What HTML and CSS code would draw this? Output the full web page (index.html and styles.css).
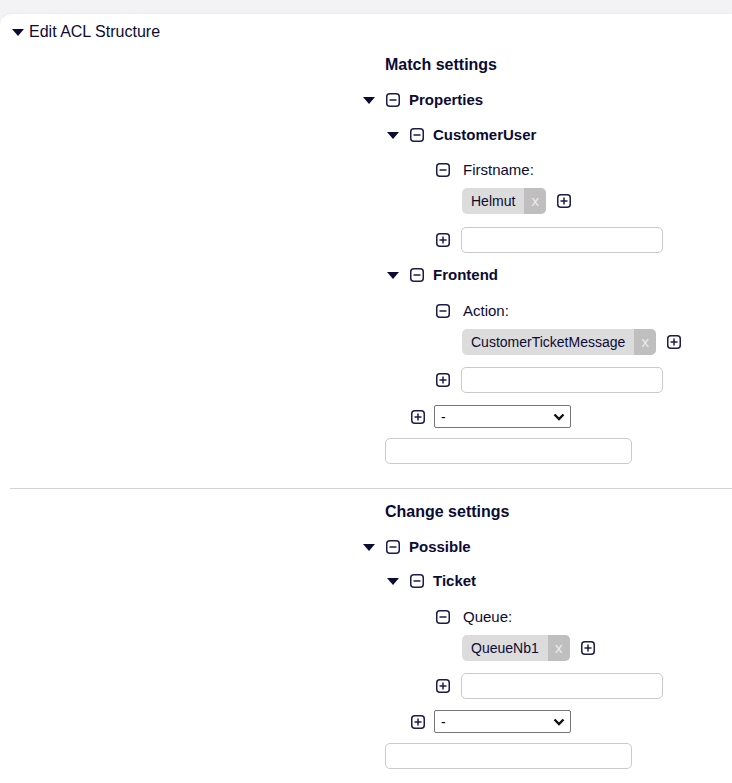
FILE: index.html
```html
<!DOCTYPE html>
<html>
<head>
<meta charset="utf-8">
<link rel="stylesheet" href="styles.css">
</head>
<body>
<div class="card">
  <div class="widget-header">
    <svg class="caret hdr" width="12" height="7" viewBox="0 0 12 7"><path d="M0 0H12L6 7Z"/></svg>
    <span>Edit ACL Structure</span>
  </div>

  <div class="section">
    <div class="section-title">Match settings</div>
    <div class="node">
      <div class="node-row">
        <svg class="caret" width="12" height="7" viewBox="0 0 12 7"><path d="M0 0H12L6 7Z"/></svg>
        <svg class="box" width="14" height="14" viewBox="0 0 14 14"><rect x="0.75" y="0.75" width="12.5" height="12.5" rx="3"/><path d="M3.5 7H10.5"/></svg>
        <span class="label">Properties</span>
      </div>
      <div class="children">
        <div class="node">
          <div class="node-row">
            <svg class="caret" width="12" height="7" viewBox="0 0 12 7"><path d="M0 0H12L6 7Z"/></svg>
            <svg class="box" width="14" height="14" viewBox="0 0 14 14"><rect x="0.75" y="0.75" width="12.5" height="12.5" rx="3"/><path d="M3.5 7H10.5"/></svg>
            <span class="label">CustomerUser</span>
          </div>
          <div class="attrs">
            <div class="attr-row">
              <svg class="box" width="14" height="14" viewBox="0 0 14 14"><rect x="0.75" y="0.75" width="12.5" height="12.5" rx="3"/><path d="M3.5 7H10.5"/></svg>
              <span class="attr-label">Firstname:</span>
            </div>
            <div class="value-row">
              <span class="chip"><span class="chip-text">Helmut</span><span class="chip-x">x</span></span>
              <svg class="box" width="14" height="14" viewBox="0 0 14 14"><rect x="0.75" y="0.75" width="12.5" height="12.5" rx="3"/><path d="M3.5 7H10.5M7 3.5V10.5"/></svg>
            </div>
            <div class="input-row">
              <svg class="box" width="14" height="14" viewBox="0 0 14 14"><rect x="0.75" y="0.75" width="12.5" height="12.5" rx="3"/><path d="M3.5 7H10.5M7 3.5V10.5"/></svg>
              <input class="text-input short" type="text">
            </div>
          </div>
        </div>
        <div class="node">
          <div class="node-row">
            <svg class="caret" width="12" height="7" viewBox="0 0 12 7"><path d="M0 0H12L6 7Z"/></svg>
            <svg class="box" width="14" height="14" viewBox="0 0 14 14"><rect x="0.75" y="0.75" width="12.5" height="12.5" rx="3"/><path d="M3.5 7H10.5"/></svg>
            <span class="label">Frontend</span>
          </div>
          <div class="attrs">
            <div class="attr-row">
              <svg class="box" width="14" height="14" viewBox="0 0 14 14"><rect x="0.75" y="0.75" width="12.5" height="12.5" rx="3"/><path d="M3.5 7H10.5"/></svg>
              <span class="attr-label">Action:</span>
            </div>
            <div class="value-row">
              <span class="chip"><span class="chip-text">CustomerTicketMessage</span><span class="chip-x">x</span></span>
              <svg class="box" width="14" height="14" viewBox="0 0 14 14"><rect x="0.75" y="0.75" width="12.5" height="12.5" rx="3"/><path d="M3.5 7H10.5M7 3.5V10.5"/></svg>
            </div>
            <div class="input-row">
              <svg class="box" width="14" height="14" viewBox="0 0 14 14"><rect x="0.75" y="0.75" width="12.5" height="12.5" rx="3"/><path d="M3.5 7H10.5M7 3.5V10.5"/></svg>
              <input class="text-input short" type="text">
            </div>
          </div>
        </div>
        <div class="add-row">
          <svg class="box" width="14" height="14" viewBox="0 0 14 14"><rect x="0.75" y="0.75" width="12.5" height="12.5" rx="3"/><path d="M3.5 7H10.5M7 3.5V10.5"/></svg>
          <span class="select-wrap">
            <select class="select"><option>-</option></select>
            <svg class="chev" width="12" height="8" viewBox="0 0 12 8"><path d="M1.5 1.5L6 6L10.5 1.5"/></svg>
          </span>
        </div>
      </div>
    </div>
    <input class="text-input long" type="text">
  </div>

  <div class="sep"></div>

  <div class="section second">
    <div class="section-title">Change settings</div>
    <div class="node">
      <div class="node-row">
        <svg class="caret" width="12" height="7" viewBox="0 0 12 7"><path d="M0 0H12L6 7Z"/></svg>
        <svg class="box" width="14" height="14" viewBox="0 0 14 14"><rect x="0.75" y="0.75" width="12.5" height="12.5" rx="3"/><path d="M3.5 7H10.5"/></svg>
        <span class="label">Possible</span>
      </div>
      <div class="children">
        <div class="node">
          <div class="node-row tight">
            <svg class="caret" width="12" height="7" viewBox="0 0 12 7"><path d="M0 0H12L6 7Z"/></svg>
            <svg class="box" width="14" height="14" viewBox="0 0 14 14"><rect x="0.75" y="0.75" width="12.5" height="12.5" rx="3"/><path d="M3.5 7H10.5"/></svg>
            <span class="label">Ticket</span>
          </div>
          <div class="attrs">
            <div class="attr-row">
              <svg class="box" width="14" height="14" viewBox="0 0 14 14"><rect x="0.75" y="0.75" width="12.5" height="12.5" rx="3"/><path d="M3.5 7H10.5"/></svg>
              <span class="attr-label">Queue:</span>
            </div>
            <div class="value-row">
              <span class="chip"><span class="chip-text">QueueNb1</span><span class="chip-x">x</span></span>
              <svg class="box" width="14" height="14" viewBox="0 0 14 14"><rect x="0.75" y="0.75" width="12.5" height="12.5" rx="3"/><path d="M3.5 7H10.5M7 3.5V10.5"/></svg>
            </div>
            <div class="input-row">
              <svg class="box" width="14" height="14" viewBox="0 0 14 14"><rect x="0.75" y="0.75" width="12.5" height="12.5" rx="3"/><path d="M3.5 7H10.5M7 3.5V10.5"/></svg>
              <input class="text-input short" type="text">
            </div>
          </div>
        </div>
        <div class="add-row">
          <svg class="box" width="14" height="14" viewBox="0 0 14 14"><rect x="0.75" y="0.75" width="12.5" height="12.5" rx="3"/><path d="M3.5 7H10.5M7 3.5V10.5"/></svg>
          <span class="select-wrap">
            <select class="select"><option>-</option></select>
            <svg class="chev" width="12" height="8" viewBox="0 0 12 8"><path d="M1.5 1.5L6 6L10.5 1.5"/></svg>
          </span>
        </div>
      </div>
    </div>
    <input class="text-input long" type="text">
  </div>
</div>
</body>
</html>
```

FILE: styles.css
```css
html, body {
  margin: 0;
  padding: 0;
}
body {
  background: #f3f3f5;
  font-family: "Liberation Sans", Arial, sans-serif;
  color: #0b0b33;
  height: 783px;
  overflow: hidden;
}
.card {
  margin-top: 14px;
  background: #ffffff;
  border-top-left-radius: 12px;
  height: 769px;
  box-shadow: 0 -1px 2px rgba(0, 0, 0, 0.03);
}
.widget-header {
  display: flex;
  align-items: center;
  height: 20px;
  padding-top: 8px;
  padding-left: 12px;
  font-size: 16px;
  line-height: 20px;
}
.widget-header span {
  margin-left: 5px;
}
.caret path {
  fill: #0b0b33;
}
.box {
  flex: none;
  display: block;
}
.box rect {
  fill: none;
  stroke: #1b1b4d;
  stroke-width: 1.5;
}
.box path {
  fill: none;
  stroke: #1b1b4d;
  stroke-width: 1.5;
}
.section {
  padding-left: 363px;
}
.section-title {
  margin-top: 13px;
  margin-left: 22px;
  height: 20px;
  line-height: 20px;
  font-size: 16px;
  font-weight: bold;
}
.second .section-title {
  margin-top: 13px;
}
.node-row {
  display: flex;
  align-items: center;
  height: 20px;
  margin-top: 15px;
}
.node-row.tight {
  margin-top: 14px;
}
.node + .node > .node-row {
  margin-top: 12px;
}
.node-row .caret {
  flex: none;
  margin-right: 11px;
}
.node-row .label {
  margin-left: 9px;
  font-size: 15px;
  font-weight: bold;
  line-height: 20px;
}
.children {
  padding-left: 24px;
}
.attrs {
  padding-left: 49px;
}
.attr-row {
  display: flex;
  align-items: center;
  height: 20px;
  margin-top: 15px;
}
.node + .node .attr-row,
.second .attr-row {
  margin-top: 16px;
}
.attr-label {
  margin-left: 13px;
  font-size: 15px;
  line-height: 20px;
}
.value-row {
  display: flex;
  align-items: center;
  margin-top: 8px;
  padding-left: 26px;
  height: 26px;
}
.chip {
  display: flex;
  height: 26px;
  border-radius: 5px;
  overflow: hidden;
  background: #dcdcdc;
  font-size: 14px;
  line-height: 26px;
  margin-right: 11px;
}
.chip-text {
  padding: 0 9px;
}
.chip-x {
  width: 22px;
  text-align: center;
  background: #bfbfbf;
  color: #ececec;
  font-size: 15px;
}
.input-row {
  display: flex;
  align-items: center;
  margin-top: 13px;
}
.node + .node .input-row,
.second .input-row {
  margin-top: 12px;
}
.input-row .box {
  margin-right: 11px;
}
.text-input {
  box-sizing: border-box;
  display: block;
  height: 26px;
  margin: 0;
  border: 1px solid #cacaca;
  border-radius: 5px;
  background: #fff;
  padding: 0 6px;
  font-family: inherit;
  font-size: 14px;
  outline: none;
}
.text-input.short {
  width: 202px;
}
.text-input.long {
  width: 247px;
  margin-left: 22px;
  margin-top: 10px;
}
.add-row {
  display: flex;
  align-items: center;
  margin-top: 12px;
  padding-left: 24px;
}
.second .add-row {
  margin-top: 11px;
}
.add-row .box {
  margin-right: 9px;
}
.select-wrap {
  position: relative;
  display: block;
}
.select {
  -webkit-appearance: none;
  appearance: none;
  box-sizing: border-box;
  display: block;
  width: 137px;
  height: 23px;
  margin: 0;
  border: 1px solid #767676;
  border-radius: 2px;
  background: #fff;
  padding: 0 6px;
  font-family: inherit;
  font-size: 14px;
  color: #000;
}
.chev {
  position: absolute;
  right: 6px;
  top: 8px;
  pointer-events: none;
}
.chev path {
  fill: none;
  stroke: #111;
  stroke-width: 2.4;
}
.sep {
  margin-top: 24px;
  margin-left: 10px;
  height: 1px;
  background: #d3d3d3;
}
```
